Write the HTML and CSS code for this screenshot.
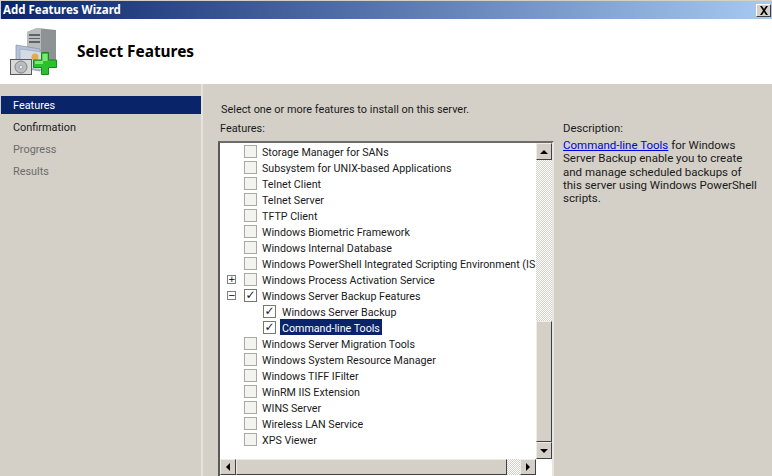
FILE: index.html
```html
<!DOCTYPE html>
<html lang="en">
<head>
<meta charset="utf-8">
<title>Add Features Wizard</title>
<link rel="stylesheet" href="styles.css">
</head>
<body>
<div class="window">
  <div class="titlebar">
    <span class="title">Add Features Wizard</span>
    <button class="close" aria-label="Close"><svg width="10" height="9" viewBox="0 0 10 9"><path d="M1 0h2l2 3 2-3h2L6 4.500 9 9H7L5 6 3 9H1l3-4.500z" fill="#000"/></svg></button>
  </div>
  <header class="banner">
    <svg class="logo" width="50" height="50" viewBox="0 0 50 50">
      <path d="M18 5l10-4 19 2v34H18z" fill="#8f9295"/>
      <path d="M18 5l10-4h4v36H18z" fill="#b9bbbd"/>
      <path d="M20 7h11v2H20zM20 11h11v1H20zM20 14h11v2H20z" fill="#5f6266"/>
      <path d="M7 18l24 4v22l-24-4z" fill="#b4c3da" stroke="#8492a8" stroke-width=".7"/>
      <path d="M11 22l22 3v18l-22-3z" fill="#d5dbe5" stroke="#9aa5b6" stroke-width=".7"/>
      <circle cx="26" cy="30" r="3.500" fill="#e8a94c"/>
      <rect x="1.500" y="32.500" width="21" height="15" fill="#d8d8d4" stroke="#55595d"/>
      <circle cx="12" cy="40" r="6" fill="#b9bdc0" stroke="#7f8589"/>
      <circle cx="12" cy="40" r="1.800" fill="#eee" stroke="#7f8589" stroke-width=".6"/>
      <path d="M32.500 25.500h7v7.500h8v7.500h-8v7h-7v-7h-8V33h8z" fill="#2cc12c" stroke="#158a1d"/>
      <path d="M33.500 27h5v7h-5zM26 34h8v3h-8z" fill="#7ce873"/>
    </svg>
    <h1 class="heading">Select Features</h1>
  </header>
  <div class="main">
    <nav class="nav">
      <div class="nav-item selected">Features</div>
      <div class="nav-item">Confirmation</div>
      <div class="nav-item muted">Progress</div>
      <div class="nav-item muted">Results</div>
    </nav>
    <section class="content">
      <p class="intro">Select one or more features to install on this server.</p>
      <div class="columns">
        <div class="features">
          <div class="label">Features:</div>
          <div class="listbox">
            <div class="list-upper">
              <div class="tree">
                <div class="row"><span class="cb"></span><span class="txt">Storage Manager for SANs</span></div>
                <div class="row"><span class="cb"></span><span class="txt">Subsystem for UNIX-based Applications</span></div>
                <div class="row"><span class="cb"></span><span class="txt">Telnet Client</span></div>
                <div class="row"><span class="cb"></span><span class="txt">Telnet Server</span></div>
                <div class="row"><span class="cb"></span><span class="txt">TFTP Client</span></div>
                <div class="row"><span class="cb"></span><span class="txt">Windows Biometric Framework</span></div>
                <div class="row"><span class="cb"></span><span class="txt">Windows Internal Database</span></div>
                <div class="row"><span class="cb"></span><span class="txt">Windows PowerShell Integrated Scripting Environment (IS</span></div>
                <div class="row"><span class="exp">+</span><span class="cb"></span><span class="txt">Windows Process Activation Service</span></div>
                <div class="row"><span class="exp">−</span><span class="cb on">✓</span><span class="txt">Windows Server Backup Features</span></div>
                <div class="row child"><span class="cb on">✓</span><span class="txt">Windows Server Backup</span></div>
                <div class="row child"><span class="cb on">✓</span><span class="txt sel">Command-line Tools</span></div>
                <div class="row"><span class="cb"></span><span class="txt">Windows Server Migration Tools</span></div>
                <div class="row"><span class="cb"></span><span class="txt">Windows System Resource Manager</span></div>
                <div class="row"><span class="cb"></span><span class="txt">Windows TIFF IFilter</span></div>
                <div class="row"><span class="cb"></span><span class="txt">WinRM IIS Extension</span></div>
                <div class="row"><span class="cb"></span><span class="txt">WINS Server</span></div>
                <div class="row"><span class="cb"></span><span class="txt">Wireless LAN Service</span></div>
                <div class="row"><span class="cb"></span><span class="txt">XPS Viewer</span></div>
              </div>
              <div class="vbar">
                <div class="sb-btn"><i class="arrow up"></i></div>
                <div class="track vt1"></div>
                <div class="thumb vthumb"></div>
                <div class="sb-btn"><i class="arrow down"></i></div>
              </div>
            </div>
            <div class="hbar">
              <div class="sb-btn"><i class="arrow left"></i></div>
              <div class="thumb hthumb"></div>
              <div class="track ht1"></div>
              <div class="sb-btn"><i class="arrow right"></i></div>
            </div>
          </div>
        </div>
        <aside class="desc">
          <div class="label">Description:</div>
          <p class="desc-text"><a href="#" class="link">Command-line Tools</a> for Windows Server Backup enable you to create and manage scheduled backups of this server using Windows PowerShell scripts.</p>
        </aside>
      </div>
    </section>
  </div>
</div>
</body>
</html>
```
FILE: styles.css
```css
* { box-sizing: border-box; }
html, body { margin: 0; padding: 0; }
body { width: 772px; height: 476px; overflow: hidden; background: #d4d0c8; font: 10.900px/16px Roboto, "Liberation Sans", sans-serif; color: #1a1a1a; }
.window { width: 772px; height: 476px; display: flex; flex-direction: column; overflow: hidden; }
.titlebar { height: 18px; flex: none; margin: 1px 0 0 1px; display: flex; align-items: center; justify-content: space-between; padding: 0 0 0 2px; background: linear-gradient(90deg, #0a246a, #a6caf0); }
.title { color: #fff; font: bold 11.5px/18px "Noto Sans", sans-serif; }
.close { width: 15px; height: 13px; margin-right: 1px; padding: 0; display: flex; align-items: center; justify-content: center; background: #d4d0c8; border: 1px solid; border-color: #fff #404040 #404040 #fff; }
.banner { height: 65px; flex: none; background: #fff; display: flex; align-items: center; padding-left: 9px; }
.logo { flex: none; margin-right: 18px; }
.heading { margin: 0; font: bold 15.400px/20px "Noto Sans", sans-serif; color: #000; }
.main { flex: 1; display: flex; min-height: 0; }
.nav { width: 203px; flex: none; padding: 12px 0 0 1px; border-right: 2px solid #e6e3dc; }
.nav-item { height: 18px; margin-bottom: 4px; padding: 1px 0 0 12px; line-height: 18px; }
.nav-item.selected { background: #0a246a; color: #fff; }
.nav-item.muted { color: #6d6c68; }
.content { flex: 1; padding: 12px 0 0 15px; min-width: 0; }
.intro { margin: 6px 0 0 3px; line-height: 16px; }
.columns { display: flex; margin-top: 3px; }
.features { width: 336px; flex: none; }
.label { line-height: 16px; margin: 0 0 4px 2px; }
.listbox { width: 336px; height: 336px; background: #fff; border: 2px solid; border-bottom: 0; border-color: #6e6c68 #e8e6e0 transparent #5a5956; }
.list-upper { display: flex; height: 316px; }
.tree { flex: 1; min-width: 0; overflow: hidden; font-size: 10.700px; }
.row { height: 16px; display: flex; align-items: center; padding-left: 24px; position: relative; white-space: nowrap; }
.row.child { padding-left: 43px; }
.txt { margin-left: 5px; padding-top: 3px; line-height: 13px; }
.child .txt { margin-left: 4px; padding: 3px 2px 0; }
.txt.sel { background: #0a246a; color: #fff; }
.cb { width: 13px; height: 13px; flex: none; background: #f3f3f0; border: 1px solid #a9a9a4; display: flex; align-items: center; justify-content: center; font: bold 12px/12px "DejaVu Sans", sans-serif; color: #222; }
.cb.on { background: #fff; border-color: #77766f; }
.exp { position: absolute; left: 7px; top: 4px; width: 9px; height: 9px; background: #fff; border: 1px solid #808080; font: 9px/7px "DejaVu Sans", sans-serif; text-align: center; color: #000; }
.vbar { width: 16px; flex: none; display: flex; flex-direction: column; }
.hbar { height: 16px; display: flex; width: 316px; background: #d4d0c8; }
.sb-btn { width: 16px; height: 17px; flex: none; background: #d4d0c8; border: 1px solid; border-color: #eeece6 #404040 #404040 #eeece6; display: flex; align-items: center; justify-content: center; }
.hbar .sb-btn { height: 16px; }
.track { background: repeating-conic-gradient(#d4d0c8 0 25%, #fff 0 50%) 0 0 / 2px 2px; }
.vt1 { height: 161px; flex: none; }
.vthumb { flex: 1; background: #d4d0c8; border: 1px solid; border-color: #eeece6 #404040 #404040 #eeece6; }
.hthumb { width: 271px; flex: none; background: #d4d0c8; border: 1px solid; border-color: #eeece6 #404040 #404040 #eeece6; }
.ht1 { flex: 1; }
.arrow { width: 0; height: 0; border: 4px solid transparent; }
.arrow.up { border-bottom-color: #000; border-top-width: 0; }
.arrow.down { border-top-color: #000; border-bottom-width: 0; }
.arrow.left { border-right-color: #000; border-left-width: 0; }
.arrow.right { border-left-color: #000; border-right-width: 0; }
.desc { width: 205px; flex: none; margin-left: 9px; }
.desc .label { margin: 0 0 2px; font-size: 11.300px; }
.desc-text { margin: 0; line-height: 13.300px; width: 200px; font-size: 11.500px; }
.link { color: #0000e0; text-decoration: underline; }
```
